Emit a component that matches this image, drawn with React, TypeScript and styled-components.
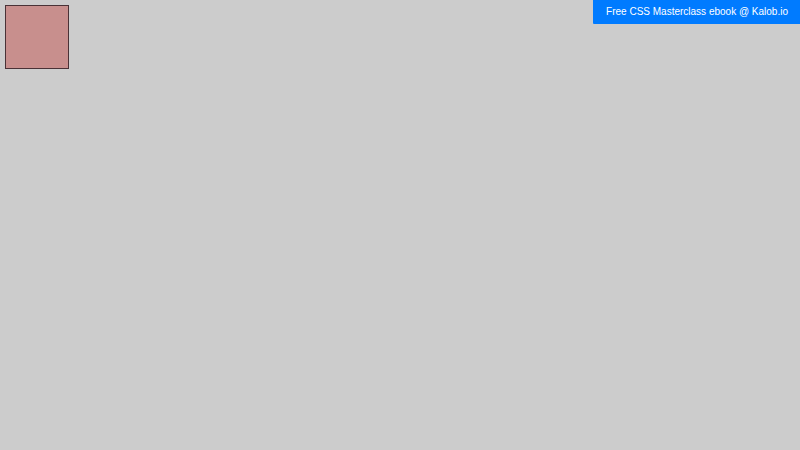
import React from "react";
import styled, { createGlobalStyle } from "styled-components";

const App = () => {
  return (
    <>
      <GlobalStyle />
      <Page>
        <Box />
        <EbookLink href="https://kalob.io">
          Free CSS Masterclass ebook @ Kalob.io
        </EbookLink>
      </Page>
    </>
  );
};

const GlobalStyle = createGlobalStyle`
  * {
    box-sizing: border-box;
  }
  body {
    margin: 0;
    background: #ccc;
    font-family: "Liberation Sans", Arial, sans-serif;
  }
`;
const Page = styled.main`
  display: flex;
  justify-content: space-between;
  align-items: flex-start;
`;
const Box = styled.div`
  width: 64px;
  height: 64px;
  margin: 5px;
  background: #c88f8d;
  border: 1px solid #4a3236;
`;
const EbookLink = styled.a`
  padding: 4px 12px 4px 13px;
  background: #007bff;
  color: #fff;
  font-size: 10px;
  line-height: 16px;
  text-decoration: none;
  border-bottom-left-radius: 1px;
`;

export default App;
